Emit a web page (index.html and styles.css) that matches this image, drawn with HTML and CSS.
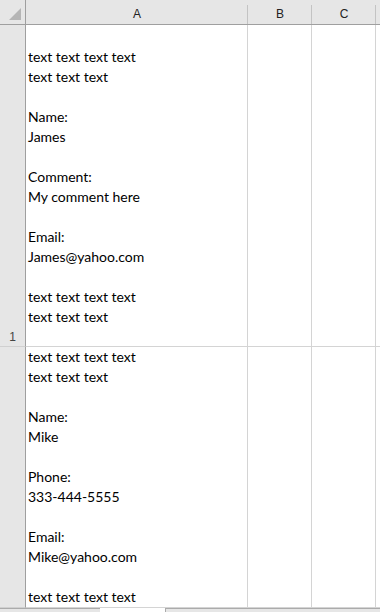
FILE: index.html
```html
<!DOCTYPE html>
<html lang="en">
<head>
    <meta charset="UTF-8">
    <meta name="viewport" content="width=device-width,initial-scale=1">
    <title>Book1 - Excel</title>
    <link rel="stylesheet" href="styles.css">
</head>
<body>
    <div class="sheet">
        <div class="grid">
            <div class="col-head corner">
                <svg width="14" height="14" viewBox="0 0 14 14"><polygon points="12,0 12,12 0,12" fill="#b5b5b5"/></svg>
            </div>
            <div class="col-head col-a">A</div>
            <div class="col-head col-b">B</div>
            <div class="col-head col-c">C</div>
            <div class="col-head col-rest"></div>

            <!-- row 1 -->
            <div class="row-head">1</div>
            <div class="cell text-cell first-row">
text text text text
text text text

Name:
James

Comment:
My comment here

Email:
James@yahoo.com

text text text text
text text text
</div>
            <div class="cell"></div>
            <div class="cell"></div>
            <div class="cell cell-rest"></div>

            <!-- row 2 (label scrolled out of view) -->
            <div class="row-head"></div>
            <div class="cell text-cell">text text text text
text text text

Name:
Mike

Phone:
333-444-5555

Email:
Mike@yahoo.com

text text text text</div>
            <div class="cell"></div>
            <div class="cell"></div>
            <div class="cell cell-rest"></div>
        </div>

        <div class="tabs">
            <div class="tab-nav"></div>
            <div class="tab-active"></div>
            <div class="tab-rest"></div>
        </div>
    </div>
</body>
</html>
```

FILE: styles.css
```css
* {
    margin: 0;
    padding: 0;
    box-sizing: border-box;
}

body {
    font-family: Lato, 'Liberation Sans', sans-serif;
    background-color: #fff;
    color: #000;
}

.sheet {
    height: 612px;
    display: flex;
    flex-direction: column;
    overflow: hidden;
}

.grid {
    flex: 1;
    overflow: hidden;
    display: grid;
    grid-template-columns: 26px 222px 64px 64px 1fr;
    grid-template-rows: 25px 322px 1fr;
}

/* column headers */
.col-head {
    background-color: #e6e6e6;
    border-bottom: 1px solid #9f9f9f;
    font-family: 'Liberation Sans', sans-serif;
    font-size: 12px;
    color: #222;
    text-align: center;
    padding-top: 7px;
    position: relative;
}

.col-a::after,
.col-b::after,
.col-c::after {
    content: '';
    position: absolute;
    right: 0;
    top: 5px;
    bottom: 0;
    width: 1px;
    background-color: #c3c3c3;
}

.corner {
    border-right: 1px solid #9f9f9f;
    padding: 8px 0 0 9px;
    text-align: left;
}

.corner svg {
    display: block;
}

/* row headers */
.row-head {
    background-color: #e6e6e6;
    border-right: 1px solid #9f9f9f;
    border-bottom: 1px solid #d0d0d0;
    font-family: 'Liberation Sans', sans-serif;
    font-size: 12px;
    color: #444;
    display: flex;
    align-items: flex-end;
    justify-content: center;
    padding-bottom: 2px;
}

/* cells */
.cell {
    border-right: 1px solid #d4d4d4;
    border-bottom: 1px solid #d4d4d4;
}

.cell-rest {
    border-right: none;
}

.text-cell {
    white-space: pre-line;
    font-size: 14px;
    line-height: 20px;
    padding-left: 2px;
}

.first-row {
    padding-top: 2px;
}

/* sheet tabs */
.tabs {
    height: 4px;
    display: flex;
    background-color: #e6e6e6;
}

.tab-nav {
    width: 100px;
    border-top: 1px solid #ababab;
}

.tab-active {
    width: 65px;
    background-color: #fff;
}

.tab-rest {
    flex: 1;
    border-top: 1px solid #ababab;
    border-left: 1px solid #ababab;
}
```
